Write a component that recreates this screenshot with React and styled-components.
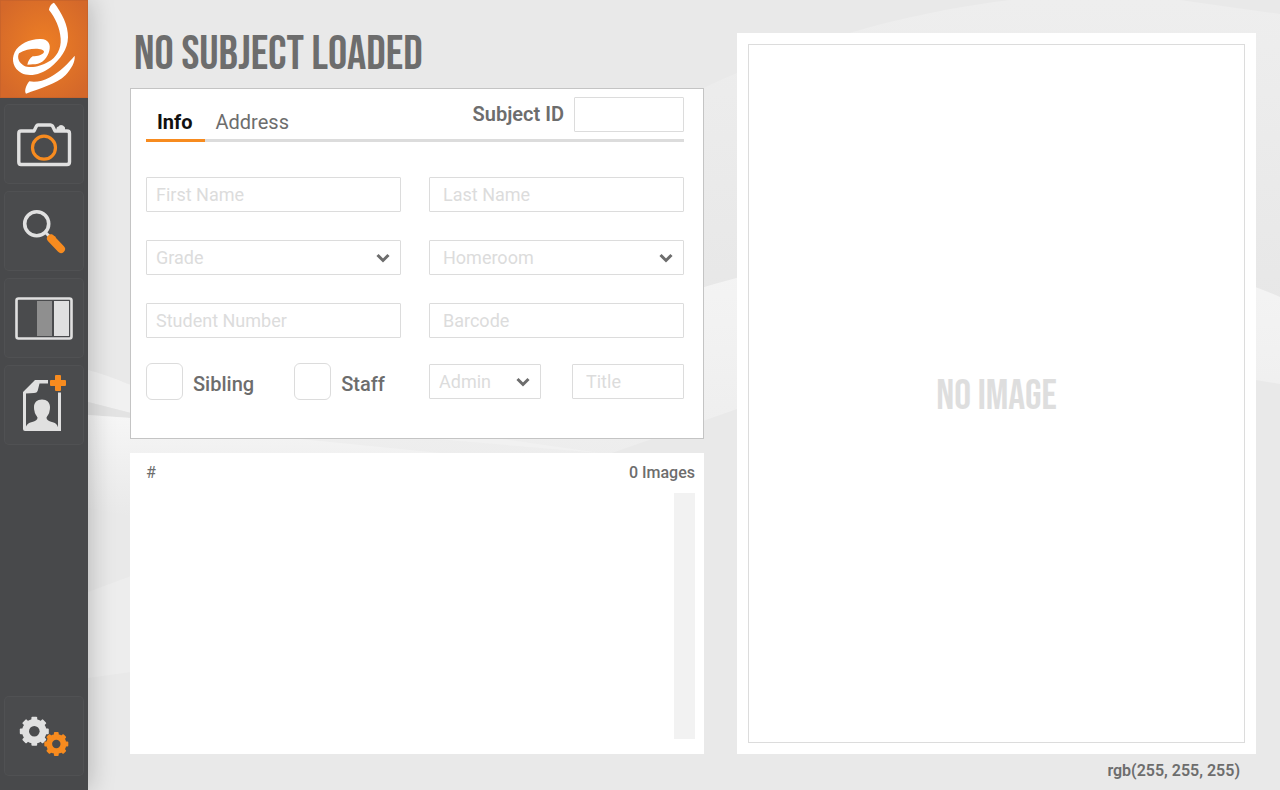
import React, { useState } from 'react';
import styled, { createGlobalStyle } from 'styled-components';

const ORANGE = '#f78b1f';
const LIGHT = '#e0e0e0';
const GREY = '#6d6d6d';
const LINE = '#dcdcdc';
const DARK = '#4a4b4d';
const CONDENSED = `'Bebas Neue', 'Roboto Condensed', 'Liberation Sans Narrow', 'Liberation Sans', sans-serif`;

const Logo = () => (
	<svg viewBox="0 0 264 294" width="88" height="98" aria-hidden="true">
		<defs>
			<radialGradient id="logoFill" cx="50%" cy="48%" r="62%">
				<stop offset="0" stopColor="#ee7f24" />
				<stop offset="1" stopColor="#d4682a" />
			</radialGradient>
		</defs>
		<rect width="264" height="294" fill="url(#logoFill)" />
		<rect x="1" y="1" width="262" height="292" fill="none" stroke="#c4622c" strokeWidth="2" />
		<path
			fill="#fff"
			fillRule="evenodd"
			d="M162 8C185 38 205 76 204 112C203 148 182 178 150 203C124 222 90 232 64 219C40 206 33 180 44 157C56 131 92 116 122 117C146 118 153 134 148 152C143 172 128 190 106 193C98 192 90 193 82 194C84 184 90 173 98 169C112 168 130 165 132 155C131 143 84 142 57 160C50 174 58 190 72 197C92 207 124 198 144 186C170 172 184 146 182 116C180 84 166 54 147 30C148 22 153 11 162 8Z"
		/>
		<path fill="#fff" d="M224 167C226 186 214 206 197 225C171 252 116 266 78 281C72 274 78 256 88 244C104 247 128 245 150 232C182 214 204 190 224 167Z" />
	</svg>
);

const CameraIcon = () => (
	<svg viewBox="0 0 80 80" aria-hidden="true">
		<path
			fill="none"
			stroke={LIGHT}
			strokeWidth="3.400"
			strokeLinejoin="round"
			d="M17 27H30L32.500 22Q33 21 34 21H46.500Q47.500 21 48.500 22L51 27H63Q65.500 27 65.500 29.500V58Q65.500 60.500 63 60.500H17Q14.800 60.500 14.800 58V29.500Q14.800 27 17 27Z"
		/>
		<path fill={LIGHT} d="M52.500 26V24Q53 22.500 54.500 22.500Q55 21 57 21Q59.500 21 60 22.500Q61 22.500 61 24V26Z" />
		<circle cx="40" cy="43.700" r="11.500" fill="none" stroke={ORANGE} strokeWidth="3.200" />
	</svg>
);

const SearchIcon = () => (
	<svg viewBox="0 0 80 80" aria-hidden="true">
		<circle cx="32.700" cy="32.700" r="12" fill="none" stroke={LIGHT} strokeWidth="3.600" />
		<path stroke={LIGHT} strokeWidth="3" d="M41 41L46 46" />
		<path stroke={ORANGE} strokeWidth="8" strokeLinecap="round" d="M47 47.500L57 58" />
		<path fill={ORANGE} d="M43 47L47 43.500L52 46L47 52Z" />
	</svg>
);

const ColumnsIcon = () => (
	<svg viewBox="0 0 80 80" aria-hidden="true">
		<rect x="12.500" y="20.500" width="55" height="40" rx="2" fill="none" stroke={LIGHT} strokeWidth="2.600" />
		<rect x="33" y="23" width="15" height="35" fill="#8f8f8f" />
		<rect x="50" y="23" width="15" height="35" fill={LIGHT} />
	</svg>
);

const AddPersonIcon = () => (
	<svg viewBox="0 0 80 80" aria-hidden="true">
		<path fill={LIGHT} d="M19 27L31 15H44V18.500H35.500L34 24.500Q33.500 28 30 28L22 28.500V66H21Q19 66 19 64Z" />
		<path fill={LIGHT} d="M54 27.500H57V66H54Z" />
		<path
			fill={LIGHT}
			d="M38 34.500C43 34.500 46 37.500 46 42C46 44 45.800 45 45.500 46C45.500 49 43 51 42.500 52.500C42.500 54.500 44 56 47 56.800C52 58 54.500 60 54.500 66H21C21.500 60 24 58 29 56.800C32 56 33.500 54.500 33.500 52.500C33 51 30.500 49 30.500 46C30.200 45 30 44 30 42C30 37.500 33 34.500 38 34.500Z"
		/>
		<path fill={ORANGE} d="M52 10H56Q57 10 57 11V15H61Q62 15 62 16V20Q62 21 61 21H57V25Q57 26 56 26H52Q51 26 51 25V21H47Q46 21 46 20V16Q46 15 47 15H51V11Q51 10 52 10Z" />
	</svg>
);

const TEETH = [0, 45, 90, 135, 180, 225, 270, 315];

const Gear = ({ x, y, size, hole, color }) => (
	<g transform={`translate(${x} ${y})`} fill={color}>
		<circle r={size * 0.84} />
		{TEETH.map((angle) => (
			<rect
				key={angle}
				x={size * -0.2}
				y={-size}
				width={size * 0.4}
				height={size * 0.5}
				rx="1"
				transform={`rotate(${angle})`}
			/>
		))}
		<circle r={hole} fill={DARK} />
	</g>
);

const SettingsIcon = () => (
	<svg viewBox="0 0 80 80" aria-hidden="true">
		<Gear x={30.3} y={35.3} size={14.5} hole={5.3} color={LIGHT} />
		<Gear x={52.3} y={48} size={12} hole={4.2} color={ORANGE} />
	</svg>
);

const Waves = () => (
	<Backdrop viewBox="0 0 1280 790" preserveAspectRatio="none" aria-hidden="true">
		<defs>
			<linearGradient id="waveTop" x1="0" y1="0" x2="0" y2="1">
				<stop offset="0" stopColor="#eeeeee" />
				<stop offset="1" stopColor="#e7e7e7" />
			</linearGradient>
			<linearGradient id="waveMid" x1="0" y1="0" x2="0" y2="1">
				<stop offset="0" stopColor="#f5f5f5" />
				<stop offset="1" stopColor="#ededed" />
			</linearGradient>
			<linearGradient id="waveLeft" x1="0" y1="0" x2="0" y2="1">
				<stop offset="0" stopColor="#f6f6f6" />
				<stop offset="1" stopColor="#e9e9e9" />
			</linearGradient>
		</defs>
		<path fill="url(#waveTop)" d="M640 120C760 55 880 16 1010 0H1180L1280 14V320H640Z" />
		<path fill="url(#waveMid)" d="M560 330C700 290 800 250 960 240C1090 236 1200 262 1280 297V384L1256 380C1060 330 880 360 737 409L612 453L420 460H132V430Z" />
		<path fill="#f1f1f1" d="M88 370C108 375 120 381 131 385L600 453L131 413L88 402Z" />
		<path fill="#e3e3e3" d="M88 402L131 413V418L88 415Z" />
		<path fill="url(#waveLeft)" d="M88 415L131 418L300 439L440 453L131 516L88 508Z" />
		<path fill="#ededed" d="M88 592L131 576L300 530V640L131 672L88 678Z" />
	</Backdrop>
);

const Chevron = () => (
	<ChevronIcon viewBox="0 0 14 10" aria-hidden="true">
		<path d="M1.500 2L7 7.500L12.500 2" fill="none" stroke={GREY} strokeWidth="3" />
	</ChevronIcon>
);

const Select = ({ label, inset }) => (
	<SelectBox>
		<SelectField aria-label={label} defaultValue="" $inset={inset}>
			<option value="">{label}</option>
		</SelectField>
		<Chevron />
	</SelectBox>
);

const tools = [
	{ label: 'Capture', Icon: CameraIcon },
	{ label: 'Search', Icon: SearchIcon },
	{ label: 'Compare', Icon: ColumnsIcon },
	{ label: 'Add subject', Icon: AddPersonIcon }
];

const App = () => {
	const [ tab, setTab ] = useState('Info');
	return (
		<Page>
			<GlobalStyle />
			<Waves />
			<Sidebar>
				<Logo />
				<Tools>
					{tools.map(({ label, Icon }) => (
						<ToolButton key={label} type="button" aria-label={label}>
							<Icon />
						</ToolButton>
					))}
					<Spacer />
					<ToolButton type="button" aria-label="Settings">
						<SettingsIcon />
					</ToolButton>
				</Tools>
			</Sidebar>
			<Main>
				<Column>
					<Heading>NO SUBJECT LOADED</Heading>
					<Card>
						<TabBar>
							{[ 'Info', 'Address' ].map((name) => (
								<Tab key={name} type="button" $active={tab === name} onClick={() => setTab(name)}>
									{name}
								</Tab>
							))}
							<SubjectLabel htmlFor="subjectId">Subject ID</SubjectLabel>
							<SubjectInput id="subjectId" />
						</TabBar>
						<Fields>
							<Input placeholder="First Name" aria-label="First Name" />
							<Input placeholder="Last Name" aria-label="Last Name" $inset />
							<Select label="Grade" />
							<Select label="Homeroom" inset />
							<Input placeholder="Student Number" aria-label="Student Number" />
							<Input placeholder="Barcode" aria-label="Barcode" $inset />
						</Fields>
						<Options>
							<Checks>
								<CheckLabel>
									<Checkbox type="checkbox" />
									<CheckText>Sibling</CheckText>
								</CheckLabel>
								<CheckLabel>
									<Checkbox type="checkbox" />
									<CheckText>Staff</CheckText>
								</CheckLabel>
							</Checks>
							<Roles>
								<Select label="Admin" />
								<Input placeholder="Title" aria-label="Title" $inset />
							</Roles>
						</Options>
					</Card>
					<Gallery>
						<GalleryHeader>
							<span>#</span>
							<Count>0 Images</Count>
						</GalleryHeader>
						<ScrollTrack />
					</Gallery>
				</Column>
				<Column>
					<Preview>
						<Frame>NO IMAGE</Frame>
					</Preview>
					<Status>rgb(255, 255, 255)</Status>
				</Column>
			</Main>
		</Page>
	);
};

export default App;

const GlobalStyle = createGlobalStyle`
	* {
		box-sizing: border-box;
	}
	body {
		margin: 0;
		background: #e9e9e9;
		color: ${GREY};
		font-family: Roboto, 'Liberation Sans', sans-serif;
	}
	button, input, select {
		font-family: inherit;
	}
`;
const Page = styled.div`
	position: relative;
	display: flex;
	min-height: 100vh;
`;
const Backdrop = styled.svg`
	position: absolute;
	inset: 0;
	width: 100%;
	height: 100%;
`;
const Sidebar = styled.nav`
	position: relative;
	flex: none;
	display: flex;
	flex-direction: column;
	width: 88px;
	background: #48494b;
	box-shadow: 2px 0 24px rgba(0, 0, 0, 0.22);
`;
const Tools = styled.div`
	flex: 1;
	display: flex;
	flex-direction: column;
	gap: 7px;
	padding: 6px 4px 14px;
`;
const Spacer = styled.div`flex: 1;`;
const ToolButton = styled.button`
	width: 80px;
	height: 80px;
	padding: 0;
	border: none;
	border-radius: 5px;
	background: ${DARK};
	box-shadow: inset 0 0 0 1px #505153;
	cursor: pointer;
	svg {
		display: block;
	}
`;
const Main = styled.main`
	position: relative;
	flex: 1;
	display: grid;
	grid-template-columns: minmax(0, 574fr) minmax(0, 519fr);
	gap: 33px;
	padding: 33px 24px 0 42px;
`;
const Column = styled.section`
	display: flex;
	flex-direction: column;
`;
const Heading = styled.h1`
	margin: 0;
	padding-left: 4px;
	height: 55px;
	font-family: ${CONDENSED};
	font-size: 48px;
	line-height: 44px;
	font-weight: 400;
	white-space: nowrap;
`;
const Card = styled.form`
	height: 351px;
	padding: 0 19px 0 15px;
	background: #fff;
	border: 1px solid #c4c4c4;
`;
const TabBar = styled.div`
	display: flex;
	align-items: flex-end;
	height: 53px;
	box-shadow: inset 0 -3px ${LINE};
`;
const Tab = styled.button`
	padding: 0 12px 5px 11px;
	border: none;
	border-bottom: 3px solid ${(props) => (props.$active ? ORANGE : 'transparent')};
	background: none;
	color: ${(props) => (props.$active ? '#111' : GREY)};
	font-size: 20px;
	line-height: 24px;
	font-weight: ${(props) => (props.$active ? 700 : 400)};
	cursor: pointer;
`;
const Input = styled.input`
	width: 100%;
	height: 35px;
	padding: 0 ${(props) => (props.$inset ? 13 : 9)}px;
	border: 1px solid ${LINE};
	border-radius: 1px;
	background: #fff;
	color: ${GREY};
	font-size: 18px;
	&::placeholder {
		color: ${LINE};
		opacity: 1;
	}
`;
const SubjectLabel = styled.label`
	align-self: flex-start;
	margin: 8px 10px 0 auto;
	font-size: 20px;
	line-height: 35px;
	font-weight: 600;
`;
const SubjectInput = styled(Input)`
	align-self: flex-start;
	width: 110px;
	margin-top: 8px;
`;
const Fields = styled.div`
	display: grid;
	grid-template-columns: repeat(2, minmax(0, 1fr));
	gap: 28px;
	margin-top: 35px;
`;
const SelectBox = styled.div`
	position: relative;
	display: flex;
`;
const SelectField = styled.select`
	appearance: none;
	width: 100%;
	height: 35px;
	padding: 0 ${(props) => (props.$inset ? 13 : 9)}px;
	border: 1px solid ${LINE};
	border-radius: 1px;
	background: #fff;
	color: ${LINE};
	font-size: 18px;
`;
const ChevronIcon = styled.svg`
	position: absolute;
	right: 11px;
	top: 13px;
	width: 14px;
	height: 10px;
	pointer-events: none;
`;
const Options = styled.div`
	display: grid;
	grid-template-columns: repeat(2, minmax(0, 1fr));
	align-items: center;
	gap: 28px;
	margin-top: 25px;
`;
const Checks = styled.div`
	display: flex;
	gap: 40px;
`;
const CheckLabel = styled.label`
	display: flex;
	align-items: center;
	gap: 10px;
	font-size: 20px;
	line-height: 24px;
	font-weight: 500;
`;
const CheckText = styled.span`padding-top: 4px;`;
const Checkbox = styled.input`
	appearance: none;
	width: 37px;
	height: 37px;
	margin: 0;
	border: 1px solid ${LINE};
	border-radius: 6px;
	background: #fff;
	&:checked {
		background: ${ORANGE};
	}
`;
const Roles = styled.div`
	display: grid;
	grid-template-columns: repeat(2, minmax(0, 1fr));
	gap: 31px;
`;
const Gallery = styled.div`
	flex: 1;
	display: flex;
	flex-direction: column;
	margin: 14px 0 36px;
	padding: 0 9px 15px 16px;
	background: #fff;
`;
const GalleryHeader = styled.div`
	display: flex;
	justify-content: space-between;
	font-size: 16px;
	line-height: 40px;
`;
const Count = styled.span`font-weight: 500;`;
const ScrollTrack = styled.div`
	flex: 1;
	align-self: flex-end;
	width: 21px;
	background: #f2f2f2;
`;
const Preview = styled.div`
	flex: 1;
	display: flex;
	padding: 11px;
	background: #fff;
`;
const Frame = styled.div`
	flex: 1;
	display: flex;
	align-items: center;
	justify-content: center;
	padding-top: 6px;
	border: 1px solid ${LINE};
	color: #dedede;
	font-family: ${CONDENSED};
	font-size: 42px;
	font-weight: 400;
`;
const Status = styled.div`
	padding: 0 16px 2px 0;
	font-size: 16px;
	line-height: 34px;
	font-weight: 600;
	text-align: right;
`;
